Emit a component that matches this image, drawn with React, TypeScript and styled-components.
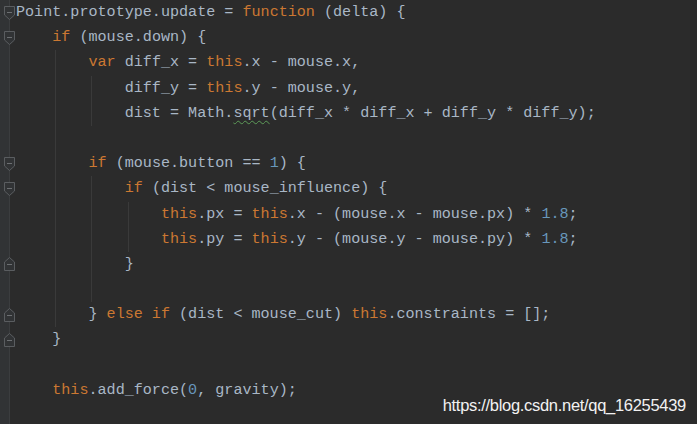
import React from "react";
import styled, { createGlobalStyle } from "styled-components";

const LINE_H = 25.2;
const CHAR_W = 9.06;

const GlobalStyle = createGlobalStyle`
  html, body { margin: 0; padding: 0; background: #2b2b2b; }
  #root { width: 697px; height: 424px; }
`;

const Editor = styled.div`
  position: relative;
  display: flex;
  width: 697px;
  height: 424px;
  overflow: hidden;
  background: #2b2b2b;
`;

const Gutter = styled.div`
  flex: 0 0 9px;
  display: flex;
  flex-direction: column;
  background: #313335;
  border-right: 1px solid #3b3d3f;
`;

const GutterCell = styled.div`
  position: relative;
  height: ${LINE_H}px;
  flex: 0 0 auto;
`;

const FoldIcon = styled.svg`
  position: absolute;
  left: 4px;
  top: 50%;
  transform: translateY(-50%);
  width: 11px;
  height: 14px;
  overflow: visible;
`;

const Code = styled.div`
  flex: 1;
  display: flex;
  flex-direction: column;
  padding-left: 6px;
  font-family: "Liberation Mono", "DejaVu Sans Mono", monospace;
  font-size: 15.1px;
  color: #a9b7c6;
`;

const Line = styled.div`
  position: relative;
  height: ${LINE_H}px;
  line-height: ${LINE_H}px;
  white-space: pre;
  flex: 0 0 auto;
`;

const Guide = styled.span`
  position: absolute;
  top: 0;
  bottom: 0;
  width: 1px;
  background: #3a3a3a;
`;

const Keyword = styled.span`
  color: #cc7832;
`;

const Num = styled.span`
  color: #6897bb;
`;

const Typo = styled.span`
  text-decoration: underline wavy #5d9b58;
  text-decoration-thickness: 1px;
  text-underline-offset: 3px;
`;

const Watermark = styled.div`
  position: absolute;
  right: 11px;
  bottom: 9px;
  font-family: "Liberation Sans", Arial, sans-serif;
  font-size: 16.5px;
  letter-spacing: -0.3px;
  color: #f2f2f2;
`;

type Tok = [string, "t" | "k" | "n" | "w"];
type CodeLine = { toks: Tok[]; guides: number[]; fold?: "down" | "up" };

const lines: CodeLine[] = [
  {
    toks: [["Point.prototype.update = ", "t"], ["function", "k"], [" (delta) {", "t"]],
    guides: [],
    fold: "down",
  },
  { toks: [["    ", "t"], ["if", "k"], [" (mouse.down) {", "t"]], guides: [], fold: "down" },
  {
    toks: [["        ", "t"], ["var", "k"], [" diff_x = ", "t"], ["this", "k"], [".x - mouse.x,", "t"]],
    guides: [4],
  },
  {
    toks: [["            diff_y = ", "t"], ["this", "k"], [".y - mouse.y,", "t"]],
    guides: [4, 8],
  },
  {
    toks: [
      ["            dist = Math.", "t"],
      ["sqrt", "w"],
      ["(diff_x * diff_x + diff_y * diff_y);", "t"],
    ],
    guides: [4, 8],
  },
  { toks: [], guides: [4] },
  {
    toks: [["        ", "t"], ["if", "k"], [" (mouse.button == ", "t"], ["1", "n"], [") {", "t"]],
    guides: [4],
    fold: "down",
  },
  {
    toks: [["            ", "t"], ["if", "k"], [" (dist < mouse_influence) {", "t"]],
    guides: [4, 8],
    fold: "down",
  },
  {
    toks: [
      ["                ", "t"],
      ["this", "k"],
      [".px = ", "t"],
      ["this", "k"],
      [".x - (mouse.x - mouse.px) * ", "t"],
      ["1.8", "n"],
      [";", "t"],
    ],
    guides: [4, 8, 12],
  },
  {
    toks: [
      ["                ", "t"],
      ["this", "k"],
      [".py = ", "t"],
      ["this", "k"],
      [".y - (mouse.y - mouse.py) * ", "t"],
      ["1.8", "n"],
      [";", "t"],
    ],
    guides: [4, 8, 12],
  },
  { toks: [["            }", "t"]], guides: [4, 8], fold: "up" },
  { toks: [], guides: [4, 8] },
  {
    toks: [
      ["        } ", "t"],
      ["else if", "k"],
      [" (dist < mouse_cut) ", "t"],
      ["this", "k"],
      [".constraints = [];", "t"],
    ],
    guides: [4],
    fold: "up",
  },
  { toks: [["    }", "t"]], guides: [], fold: "up" },
  { toks: [], guides: [] },
  {
    toks: [["    ", "t"], ["this", "k"], [".add_force(", "t"], ["0", "n"], [", gravity);", "t"]],
    guides: [],
  },
  { toks: [], guides: [] },
];

function Fold({ dir }: { dir: "down" | "up" }) {
  const shape =
    dir === "down"
      ? "M0.5 0.5 H10.5 V9 L5.5 13.5 L0.5 9 Z"
      : "M0.5 13.5 H10.5 V5 L5.5 0.5 L0.5 5 Z";
  const y = dir === "down" ? 6.5 : 7.5;
  return (
    <FoldIcon viewBox="0 0 11 14">
      <path d={shape} fill="#313335" stroke="#5a5d60" strokeWidth="1" />
      <path d={`M3 ${y} H8`} stroke="#6c6f72" strokeWidth="1" />
    </FoldIcon>
  );
}

function renderTok(t: Tok, i: number) {
  const [text, kind] = t;
  if (kind === "k") return <Keyword key={i}>{text}</Keyword>;
  if (kind === "n") return <Num key={i}>{text}</Num>;
  if (kind === "w") return <Typo key={i}>{text}</Typo>;
  return <React.Fragment key={i}>{text}</React.Fragment>;
}

export default function App() {
  return (
    <>
      <GlobalStyle />
      <Editor>
        <Gutter>
          {lines.map((l, i) => (
            <GutterCell key={i}>{l.fold && <Fold dir={l.fold} />}</GutterCell>
          ))}
        </Gutter>
        <Code>
          {lines.map((l, i) => (
            <Line key={i}>
              {l.guides.map((g) => (
                <Guide key={g} style={{ left: g * CHAR_W + 3 }} />
              ))}
              {l.toks.map(renderTok)}
            </Line>
          ))}
        </Code>
        <Watermark>https://blog.csdn.net/qq_16255439</Watermark>
      </Editor>
    </>
  );
}
